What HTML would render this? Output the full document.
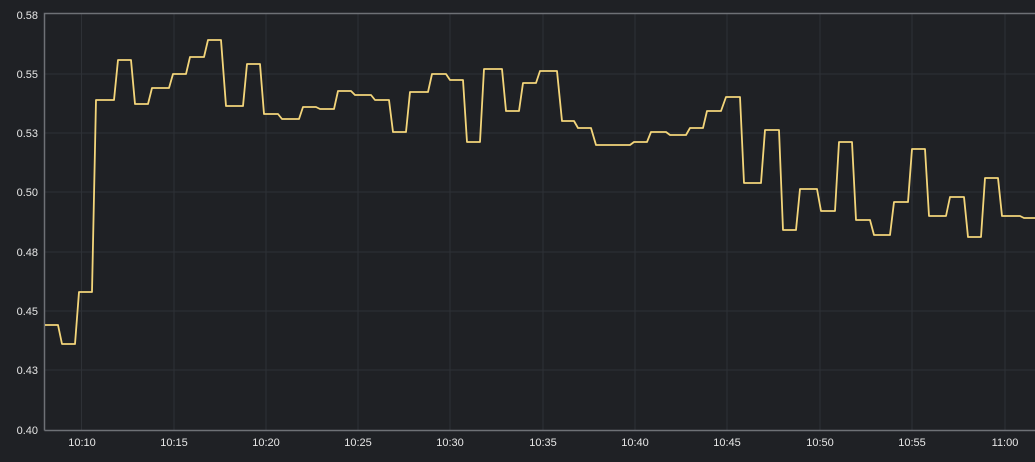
<!DOCTYPE html>
<html><head><style>
html,body{margin:0;padding:0;background:#1f2125;}
svg{display:block;}
text{font-family:"Liberation Sans",sans-serif;font-size:11px;fill:#e6e6e6;}
</style></head><body>
<svg width="1035" height="462" viewBox="0 0 1035 462">
<rect width="1035" height="462" fill="#1f2125"/>
<g stroke="#2e3136" stroke-width="1">
<line x1="45" y1="74" x2="1035" y2="74"/><line x1="45" y1="133" x2="1035" y2="133"/>
<line x1="45" y1="192" x2="1035" y2="192"/><line x1="45" y1="252" x2="1035" y2="252"/>
<line x1="45" y1="311" x2="1035" y2="311"/><line x1="45" y1="370" x2="1035" y2="370"/>
<line x1="81.5" y1="13" x2="81.5" y2="430"/><line x1="174" y1="13" x2="174" y2="430"/>
<line x1="266" y1="13" x2="266" y2="430"/><line x1="358" y1="13" x2="358" y2="430"/>
<line x1="450" y1="13" x2="450" y2="430"/><line x1="543" y1="13" x2="543" y2="430"/>
<line x1="635" y1="13" x2="635" y2="430"/><line x1="727" y1="13" x2="727" y2="430"/>
<line x1="820" y1="13" x2="820" y2="430"/><line x1="912" y1="13" x2="912" y2="430"/>
<line x1="1005" y1="13" x2="1005" y2="430"/>
</g>
<path d="M44.5 430.5 V13.5 H1035 M44.5 430.5 H1035" fill="none" stroke="#6e7176" stroke-width="1.5"/>
<g text-anchor="end">
<text x="38" y="19">0.58</text><text x="38" y="78">0.55</text><text x="38" y="137">0.53</text>
<text x="38" y="196">0.50</text><text x="38" y="256">0.48</text><text x="38" y="315">0.45</text>
<text x="38" y="374">0.43</text><text x="38" y="434">0.40</text>
</g>
<g text-anchor="middle">
<text x="82" y="446">10:10</text><text x="174" y="446">10:15</text><text x="266" y="446">10:20</text>
<text x="358" y="446">10:25</text><text x="450" y="446">10:30</text><text x="543" y="446">10:35</text>
<text x="635" y="446">10:40</text><text x="727" y="446">10:45</text><text x="820" y="446">10:50</text>
<text x="912" y="446">10:55</text><text x="1005" y="446">11:00</text>
</g>
<polyline fill="none" stroke="#f3d57a" stroke-width="1.8" stroke-linejoin="round" points="45,325 58,325 62,344 75,344 79,292 92,292 96,100 114,100 118,60 131,60 135,104 148,104 152,88 169,88 173,74 186,74 190,57 204,57 208,40 221,40 226,106 243,106 247,64 260,64 264,114 278,114 282,119 299,119 303,107 316,107 320,109 334,109 338,91 351,91 355,95 371,95 375,100 389,100 393,132 406,132 410,92 428,92 432,74 446,74 450,80 463,80 467,142 480,142 484,69 502,69 506,111 519,111 523,83 536,83 540,71 557,71 562,121 574,121 578,128 591,128 596,145 630,145 634,142 647,142 651,132 666,132 670,135 686,135 690,128 703,128 707,111 721,111 726,97 740,97 744,183 761,183 765,130 779,130 783,230 796,230 800,189 817,189 821,211 835,211 839,142 852,142 856,220 870,220 874,235 890,235 894,202 908,202 912,149 925,149 929,216 946,216 950,197 964,197 968,237 981,237 985,178 998,178 1002,216 1020,216 1024,218 1035,218"/>
</svg>
</body></html>
